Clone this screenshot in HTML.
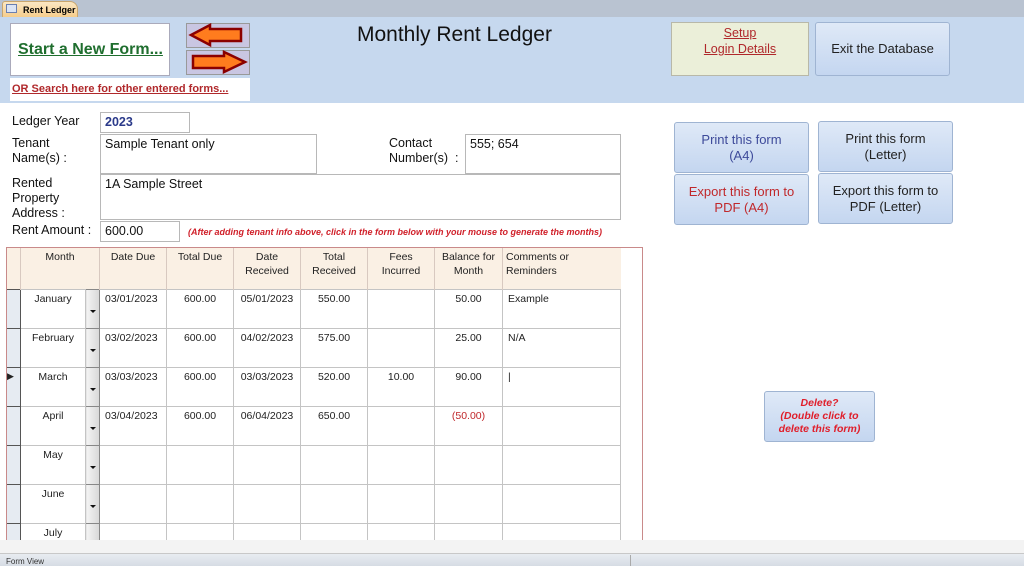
<!DOCTYPE html>
<html><head><meta charset="utf-8"><style>
*{box-sizing:border-box;margin:0;padding:0}
body{width:1024px;height:566px;overflow:hidden;background:#fff;font-family:"Liberation Sans",sans-serif;position:relative}
.a{position:absolute}
.btn{position:absolute;border:1px solid #9fb4d2;border-radius:3px;background:linear-gradient(#dfe9f7,#c4d6f0);text-align:center;font-size:13px;color:#222;display:flex;align-items:center;justify-content:center;line-height:16px}
.lbl{position:absolute;font-size:12.5px;color:#111;line-height:15px}
.box{position:absolute;border:1px solid #b8b8b8;background:#fff;font-size:12.5px;padding:2px 4px;color:#111}
table{position:absolute;left:6px;top:247px;border-collapse:collapse;table-layout:fixed;font-family:"Liberation Sans",sans-serif;font-size:10.5px;color:#222}
td{border:1px solid #c4c4c4;vertical-align:top;height:39px;padding-top:3px;text-align:center}
th{background:#faf0e4;font-weight:normal;vertical-align:top;height:42px;padding-top:3px;line-height:14px;border-left:1px solid #d8c9c0;font-size:10.5px}
td.s{background:#e6ebf2;border:1px solid #555}
td.dd{background:linear-gradient(90deg,#f4f4f4,#d8d8d8);border:1px solid #888;position:relative}
td.dd:after{content:"";position:absolute;left:4px;top:20px;border:3px solid transparent;border-top:3px solid #111}
td.l{text-align:left;padding-left:5px}
</style></head><body>
<div class="a" style="left:0;top:0;width:1024px;height:17px;background:#b9c3d1"></div>
<div class="a" style="left:2px;top:1px;width:76px;height:16px;background:linear-gradient(#fbe7c3,#f6cd8c);border:1px solid #c9a66e;border-bottom:none;border-radius:3px 8px 0 0;font-size:9px;font-weight:bold;padding:3px 0 0 20px">Rent Ledger</div>
<div class="a" style="left:6px;top:4px;width:11px;height:9px;border:1px solid #6a7fb0;background:#dbe4f4"></div>
<div class="a" style="left:0;top:17px;width:1024px;height:86px;background:#c6d8ee"></div>
<div class="a" style="left:10px;top:23px;width:160px;height:53px;background:#fff;border:1px solid #aab;font-size:16px;font-weight:bold;color:#1f6e2e;text-decoration:underline;padding:17px 0 0 7px">Start a New Form...</div>
<div class="a" style="left:10px;top:78px;width:240px;height:23px;background:#fff;font-size:11px;font-weight:bold;color:#b0282b;text-decoration:underline;padding:5px 0 0 2px">OR Search here for other entered forms...</div>
<div class="a" style="left:186px;top:23px;width:64px;height:25px;background:#c9c6e2;border:1px solid #999"></div>
<div class="a" style="left:186px;top:50px;width:64px;height:25px;background:#c9c6e2;border:1px solid #999"></div>
<svg class="a" style="left:186px;top:23px" width="64" height="53"><path d="M5 12 L24 2 L24 6 L55 6 L55 18 L24 18 L24 22 Z" fill="#ff7c1e" stroke="#8b0000" stroke-width="2.5"/><path d="M7 33 L38 33 L38 29 L59 39 L38 49 L38 45 L7 45 Z" fill="#ff7c1e" stroke="#8b0000" stroke-width="2.5"/></svg>
<div class="a" style="left:357px;top:23px;font-size:21px;color:#111">Monthly Rent Ledger</div>
<div class="a" style="left:671px;top:22px;width:138px;height:54px;background:#ebefd9;border:1px solid #b8b8a8;text-align:center;font-size:12.5px;color:#b0282b;text-decoration:underline;padding-top:2px;line-height:16px">Setup<br>Login Details</div>
<div class="btn" style="left:815px;top:22px;width:135px;height:54px">Exit the Database</div>
<div class="btn" style="left:674px;top:122px;width:135px;height:51px;color:#3d4a9a">Print this form<br>(A4)</div>
<div class="btn" style="left:818px;top:121px;width:135px;height:51px">Print this form<br>(Letter)</div>
<div class="btn" style="left:674px;top:174px;width:135px;height:51px;color:#c0282b">Export this form to<br>PDF (A4)</div>
<div class="btn" style="left:818px;top:173px;width:135px;height:51px">Export this form to<br>PDF (Letter)</div>
<div class="btn" style="left:764px;top:391px;width:111px;height:51px;color:#e01e2a;font-weight:bold;font-style:italic;font-size:10.5px;line-height:13px">Delete?<br>(Double click to<br>delete this form)</div>
<div class="lbl" style="left:12px;top:114px">Ledger Year</div>
<div class="box" style="left:100px;top:112px;width:90px;height:21px;color:#2b3a8a;font-weight:bold">2023</div>
<div class="lbl" style="left:12px;top:136px">Tenant<br>Name(s) :</div>
<div class="box" style="left:100px;top:134px;width:217px;height:40px">Sample Tenant only</div>
<div class="lbl" style="left:389px;top:136px">Contact<br>Number(s)&nbsp; :</div>
<div class="box" style="left:465px;top:134px;width:156px;height:40px">555; 654</div>
<div class="lbl" style="left:12px;top:176px">Rented<br>Property<br>Address :</div>
<div class="box" style="left:100px;top:174px;width:521px;height:46px">1A Sample Street</div>
<div class="lbl" style="left:12px;top:223px">Rent Amount :</div>
<div class="box" style="left:100px;top:221px;width:80px;height:21px">600.00</div>
<div class="a" style="left:188px;top:227px;font-size:9px;font-weight:bold;font-style:italic;color:#d0202a">(After adding tenant info above, click in the form below with your mouse to generate the months)</div>
<table>
<colgroup><col style="width:14px"><col style="width:65px"><col style="width:14px"><col style="width:67px"><col style="width:67px"><col style="width:67px"><col style="width:67px"><col style="width:67px"><col style="width:68px"><col style="width:118px"><col style="width:22px"></colgroup>
<tr><th style="border-left:none"></th><th colspan="2">Month</th><th>Date Due</th><th>Total Due</th><th>Date<br>Received</th><th>Total<br>Received</th><th>Fees<br>Incurred</th><th>Balance for<br>Month</th><th style="text-align:left;padding-left:3px">Comments or<br>Reminders</th><th style="background:#fff;border-left:none"></th></tr>
<tr><td class="s"></td><td>January</td><td class="dd"></td><td class="l">03/01/2023</td><td>600.00</td><td>05/01/2023</td><td>550.00</td><td></td><td>50.00</td><td class="l">Example</td><td style="border:none"></td></tr>
<tr><td class="s"></td><td>February</td><td class="dd"></td><td class="l">03/02/2023</td><td>600.00</td><td>04/02/2023</td><td>575.00</td><td></td><td>25.00</td><td class="l">N/A</td><td style="border:none"></td></tr>
<tr><td class="s" style="font-size:9px;text-align:left">▶</td><td>March</td><td class="dd"></td><td class="l">03/03/2023</td><td>600.00</td><td>03/03/2023</td><td>520.00</td><td>10.00</td><td>90.00</td><td class="l">|</td><td style="border:none"></td></tr>
<tr><td class="s"></td><td>April</td><td class="dd"></td><td class="l">03/04/2023</td><td>600.00</td><td>06/04/2023</td><td>650.00</td><td></td><td style="color:#c0282b">(50.00)</td><td></td><td style="border:none"></td></tr>
<tr><td class="s"></td><td>May</td><td class="dd"></td><td></td><td></td><td></td><td></td><td></td><td></td><td></td><td style="border:none"></td></tr>
<tr><td class="s"></td><td>June</td><td class="dd"></td><td></td><td></td><td></td><td></td><td></td><td></td><td></td><td style="border:none"></td></tr>
<tr><td class="s"></td><td>July</td><td class="dd"></td><td></td><td></td><td></td><td></td><td></td><td></td><td></td><td style="border:none"></td></tr>
</table>
<div class="a" style="left:6px;top:247px;width:637px;height:293px;border:1px solid #c98a8a;border-bottom:none;pointer-events:none"></div>
<div class="a" style="left:0;top:540px;width:1024px;height:14px;background:#f3f3f3;border-bottom:1px solid #c8c8c8"></div>
<div class="a" style="left:0;top:554px;width:1024px;height:12px;background:linear-gradient(#e8ecf1,#d6dce4);font-size:8px;color:#333;padding:3px 0 0 6px">Form View</div>
<div class="a" style="left:630px;top:555px;width:1px;height:11px;background:#aaa"></div>
</body></html>
